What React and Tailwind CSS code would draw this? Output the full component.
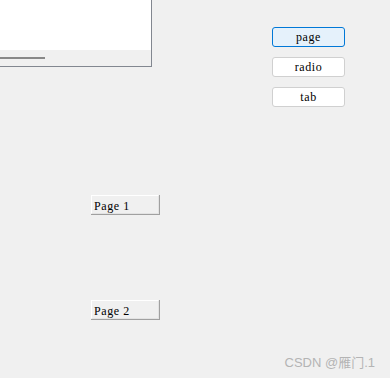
import React from "react";

const simsun = "font-['Liberation_Serif','DejaVu_Serif',serif] text-[12px] tracking-[0.6px] text-black leading-none";

function NavButton({ label, active }) {
  return (
    <button
      className={`w-[73px] h-[20px] rounded-[3px] border flex items-center justify-center ${simsun} ${
        active ? "bg-[#e5f1fb] border-[#0078d7]" : "bg-white border-[#d0d0d0]"
      }`}
    >
      {label}
    </button>
  );
}

function PageLabel({ text }) {
  return (
    <div className="w-[69px] h-[20px] border-r border-b border-[#a0a0a0]">
      <div
        className={`h-full flex items-center pl-[2px] pt-[2px] border-t border-l border-white border-r border-b border-r-[#e3e3e3] border-b-[#e3e3e3] bg-[#f0f0f0] ${simsun}`}
      >
        {text}
      </div>
    </div>
  );
}

export default function App() {
  return (
    <div className="relative w-[390px] h-[378px] bg-[#f0f0f0] overflow-hidden flex">
      <div className="w-[272px] flex flex-col">
        {/* list view with horizontal scrollbar */}
        <div className="w-[152px] h-[67px] border-r border-b border-[#828790] flex flex-col">
          <div className="h-[50px] bg-white" />
          <div className="flex-1 bg-[#f0f0f0] pt-[7px]">
            <div className="w-[45px] h-[2px] bg-[#888888]" />
          </div>
        </div>

        <div className="mt-[128px] ml-[91px]">
          <PageLabel text="Page 1" />
        </div>
        <div className="mt-[85px] ml-[91px]">
          <PageLabel text="Page 2" />
        </div>
      </div>

      <div className="pt-[27px] flex flex-col gap-[10px]">
        <NavButton label="page" active />
        <NavButton label="radio" />
        <NavButton label="tab" />
      </div>

      <div className="absolute right-[15px] bottom-[9px] text-[13px] leading-none text-[#b4b4b4] font-['Liberation_Sans','Noto_Sans_CJK_SC',sans-serif]">
        CSDN @雁门.1
      </div>
    </div>
  );
}
